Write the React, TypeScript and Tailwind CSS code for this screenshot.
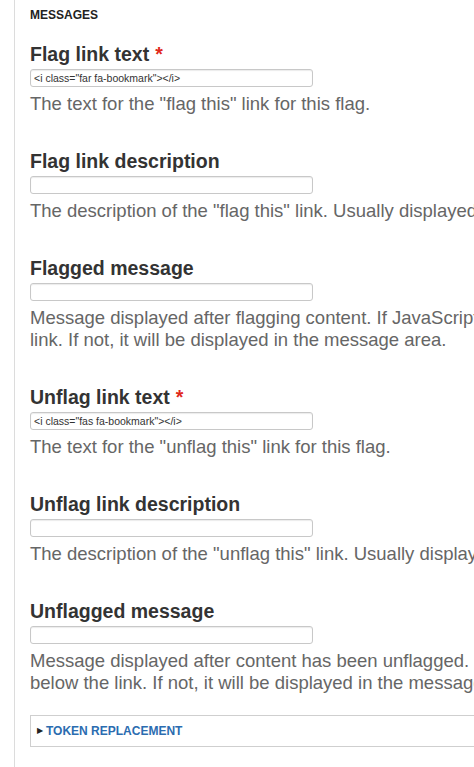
import { ReactNode } from "react";

type FieldProps = {
  label: string;
  required?: boolean;
  value?: string;
  children: ReactNode;
};

function Field({ label, required, value, children }: FieldProps) {
  return (
    <div className="mt-[34.5px] first:mt-0">
      <div className="text-[19.5px] leading-[24px] font-bold text-[#333]">
        {label}
        {required && <span className="ml-[6px] text-[#e0281b]">*</span>}
      </div>
      <div className="mt-[3px] h-[18px] w-[283px] rounded-[3px] border border-[#c8c8c8] bg-white shadow-[inset_0_1px_1px_rgba(0,0,0,0.08)] px-[3px] text-[10.5px] leading-[16px] text-[#333] whitespace-nowrap overflow-hidden">
        {value}
      </div>
      <div className="mt-[5.5px] text-[18.5px] leading-[22px] text-[#666] whitespace-nowrap">
        {children}
      </div>
    </div>
  );
}

export default function App() {
  return (
    <div className="min-h-[767px] bg-white overflow-hidden pl-[14px] font-['Liberation_Sans',Arial,sans-serif]">
      <div className="min-h-[767px] border-l border-[#dcdcdc] pl-[15px] pt-[7px]">
        <div className="text-[12px] leading-[16px] font-bold text-[#222]">MESSAGES</div>

        <div className="mt-[19px]">
          <Field label="Flag link text" required value={'<i class="far fa-bookmark"></i>'}>
            The text for the "flag this" link for this flag.
          </Field>
          <Field label="Flag link description">
            The description of the "flag this" link. Usually displayed on mouseover.
          </Field>
          <Field label="Flagged message">
            Message displayed after flagging content. If JavaScript is enabled, it will be displayed below the
            <br />
            link. If not, it will be displayed in the message area.
          </Field>
          <Field label="Unflag link text" required value={'<i class="fas fa-bookmark"></i>'}>
            The text for the "unflag this" link for this flag.
          </Field>
          <Field label="Unflag link description">
            The description of the "unflag this" link. Usually displayed on mouseover.
          </Field>
          <Field label="Unflagged message">
            Message displayed after content has been unflagged. If JavaScript is enabled, it will be displayed
            <br />
            below the link. If not, it will be displayed in the message area.
          </Field>
        </div>

        <div className="mt-[21px] h-[32px] w-[700px] border border-[#cfcfcf] flex items-center pl-[6px]">
          <span className="text-[8px] text-[#222] mr-[3px]">▶</span>
          <span className="text-[12px] font-bold text-[#2b6cb0]">TOKEN REPLACEMENT</span>
        </div>
      </div>
    </div>
  );
}
